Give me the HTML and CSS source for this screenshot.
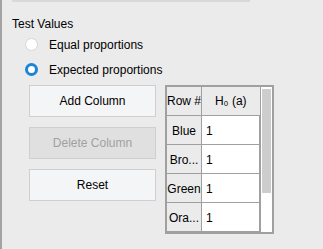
FILE: index.html
```html
<!DOCTYPE html>
<html lang="en">
<head>
    <meta charset="UTF-8">
    <title>Test Values</title>
    <link rel="stylesheet" href="styles.css">
</head>
<body>
    <div class="panel">
        <div class="top-rule"></div>
        <div class="section-title">Test Values</div>

        <label class="radio-row">
            <span class="radio"></span>
            <span>Equal proportions</span>
        </label>
        <label class="radio-row">
            <span class="radio checked"></span>
            <span>Expected proportions</span>
        </label>

        <div class="editor">
            <div class="buttons">
                <button class="btn">Add Column</button>
                <button class="btn" disabled>Delete Column</button>
                <button class="btn">Reset</button>
            </div>

            <div class="table-box">
                <table class="values">
                    <tr class="head">
                        <th class="row-head"><div class="cell-text">Row #</div></th>
                        <th>H₀ (a)</th>
                    </tr>
                    <tr><th class="row-head"><div class="cell-text">Blue</div></th><td>1</td></tr>
                    <tr><th class="row-head"><div class="cell-text">Bro...</div></th><td>1</td></tr>
                    <tr><th class="row-head"><div class="cell-text">Green</div></th><td>1</td></tr>
                    <tr><th class="row-head"><div class="cell-text">Ora...</div></th><td>1</td></tr>
                    <tr><th class="row-head"></th><td></td></tr>
                </table>
                <div class="scrollbar">
                    <div class="thumb"></div>
                </div>
            </div>
        </div>
    </div>
</body>
</html>
```

FILE: styles.css
```css
body {
    margin: 0;
    background: #ebebeb;
    font-family: "Liberation Sans", Arial, sans-serif;
    font-size: 12px;
    color: #000;
}
.panel {
    height: 249px;
    border-left: 2px solid #a3a3a3;
    box-sizing: border-box;
    padding-left: 10px;
    overflow: hidden;
}
.top-rule {
    width: 238px;
    height: 2px;
    background: #d9d9d9;
}
.section-title {
    margin-top: 15px;
    height: 15px;
}
.radio-row {
    display: flex;
    align-items: center;
    gap: 11px;
    height: 25px;
    padding-left: 13px;
}
.radio {
    width: 11px;
    height: 11px;
    border: 1px solid #d6d6d6;
    border-radius: 50%;
    background: #fff;
}
.radio.checked {
    width: 7px;
    height: 7px;
    border: 3px solid #1a85d6;
}
.editor {
    display: flex;
    gap: 9px;
    margin-top: 3px;
    padding-left: 17px;
}
.buttons {
    display: flex;
    flex-direction: column;
    gap: 10px;
}
.btn {
    width: 127px;
    height: 32px;
    background: #f4f5f6;
    border: 1px solid #cfcfcf;
    border-radius: 0;
    font-family: "Liberation Sans", Arial, sans-serif;
    font-size: 12px;
    color: #000;
    padding: 0;
}
.btn:disabled {
    background: #e0e0e0;
    color: #a0a0a0;
}
.table-box {
    display: flex;
    width: 109px;
    height: 149px;
    border: 2px solid #a0a0a0;
    box-sizing: border-box;
    overflow: hidden;
    background: #ebebeb;
}
.values {
    border-collapse: collapse;
    table-layout: fixed;
    width: 94px;
    align-self: flex-start;
}
.values tr {
    height: 29px;
}
.values tr.head {
    height: 28px;
}
.values th,
.values td {
    padding: 0;
    border: 1px solid #a0a0a0;
    font-weight: normal;
    white-space: nowrap;
    overflow: hidden;
    padding-top: 2px;
}
.values tr:first-child th {
    border-top: none;
    padding-top: 0;
}
.values .row-head {
    width: 34px;
    border-left: none;
    background: #ebebeb;
}
.cell-text {
    display: flex;
    justify-content: center;
    overflow: hidden;
}
.values .head th {
    background: #ebebeb;
    text-align: center;
}
.values td {
    background: #fff;
    padding-left: 4px;
    border-right-width: 2px;
}
.scrollbar {
    flex: 1;
    background: #fff;
    padding: 2px 1px 0;
}
.thumb {
    height: 104px;
    background: #cdcdcd;
}
```
